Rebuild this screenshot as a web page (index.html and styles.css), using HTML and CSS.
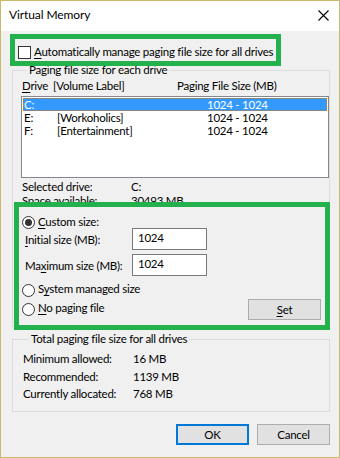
FILE: index.html
```html
<!DOCTYPE html>
<html>
<head>
<meta charset="utf-8">
<link rel="stylesheet" href="styles.css">
</head>
<body>
<div class="dlg">
  <div class="titlebar">
    <span class="title">Virtual Memory</span>
    <svg class="close" width="11" height="11" viewBox="0 0 11 11"><path d="M0.5 0.5 L10.5 10.5 M10.5 0.5 L0.5 10.5" stroke="#000" stroke-width="1.1" fill="none"/></svg>
  </div>
  <div class="body">
    <div class="auto-row"><span class="checkbox"></span><span><u>A</u>utomatically manage paging file size for all drives</span></div>

    <div class="group g1">
      <div class="group-title">Paging file size for each drive</div>
      <div class="list-head"><span><u>D</u>rive</span><span>[Volume Label]</span><span>Paging File Size (MB)</span></div>
      <div class="list">
        <div class="row sel"><span>C:</span><span></span><span>1024 - 1024</span></div>
        <div class="row"><span>E:</span><span>[Workoholics]</span><span>1024 - 1024</span></div>
        <div class="row"><span>F:</span><span>[Entertainment]</span><span>1024 - 1024</span></div>
      </div>
      <div class="info">
        <div class="info-row"><span class="info-k">Selected drive:</span><span>C:</span></div>
        <div class="info-row"><span class="info-k">Space available:</span><span>30493 MB</span></div>
      </div>
      <div class="opt opt-custom"><span class="radio on"></span><span><u>C</u>ustom size:</span></div>
      <div class="field"><span class="field-k"><u>I</u>nitial size (MB):</span><div class="edit">1024</div></div>
      <div class="field field-max"><span class="field-k">Ma<u>x</u>imum size (MB):</span><div class="edit">1024</div></div>
      <div class="opt opt-sys"><span class="radio"></span><span>S<u>y</u>stem managed size</span></div>
      <div class="last-row">
        <div class="opt opt-none"><span class="radio"></span><span><u>N</u>o paging file</span></div>
        <div class="btn"><u>S</u>et</div>
      </div>
    </div>

    <div class="group g2">
      <div class="group-title">Total paging file size for all drives</div>
      <div class="totals">
        <div class="tot-row"><span class="tot-k">Minimum allowed:</span><span>16 MB</span></div>
        <div class="tot-row"><span class="tot-k">Recommended:</span><span>1139 MB</span></div>
        <div class="tot-row"><span class="tot-k">Currently allocated:</span><span>768 MB</span></div>
      </div>
    </div>

    <div class="buttons">
      <div class="btn btn-default">OK</div>
      <div class="btn">Cancel</div>
    </div>
  </div>
  <div class="hl hl-1"></div>
  <div class="hl hl-2"></div>
</div>
</body>
</html>
```

FILE: styles.css
```css
html, body {
  margin: 0;
  padding: 0;
  background: #ffffff;
}

.dlg {
  width: 340px;
  height: 458px;
  box-sizing: border-box;
  border: 1px solid #c9b96b;
  background: #f0f0f0;
  position: relative;
  font-family: Lato, "Liberation Sans", sans-serif;
  font-size: 11.5px;
  letter-spacing: -0.25px;
  line-height: 15px;
  color: #000;
  display: flex;
  flex-direction: column;
  overflow: hidden;
}

u {
  text-decoration: underline;
  text-underline-offset: 2px;
}

.titlebar {
  height: 30px;
  flex: none;
  background: #ffffff;
  display: flex;
  align-items: flex-start;
  justify-content: space-between;
  box-sizing: border-box;
  padding: 6px 10px 0 8px;
}

.title {
  font-size: 12px;
  letter-spacing: -0.1px;
}

.close {
  margin-top: 3px;
  display: block;
}

.body {
  display: flex;
  flex-direction: column;
}

.auto-row {
  display: flex;
  align-items: flex-start;
  margin-top: 13px;
  padding-left: 17px;
  height: 15px;
}

.checkbox {
  width: 13px;
  height: 13px;
  box-sizing: border-box;
  border: 1px solid #333333;
  background: #ffffff;
  margin-top: 2px;
  margin-right: 3px;
  flex: none;
}

.group {
  border: 1px solid #dcdcdc;
  margin-left: 11px;
  width: 318px;
  box-sizing: border-box;
  display: flex;
  flex-direction: column;
}

.group-title {
  align-self: flex-start;
  margin: -9px 0 0 6px;
  padding: 0 2px;
  background: #f0f0f0;
  height: 15px;
}

.g1 {
  margin-top: 11px;
  padding: 0 0 6px 8px;
}

.list-head {
  margin-top: 1px;
  display: grid;
  grid-template-columns: 31px 124px auto;
  padding-left: 1px;
  height: 15px;
}

.list {
  margin-top: 3px;
  width: 308px;
  height: 82px;
  box-sizing: border-box;
  border: 1px solid #828790;
  background: #ffffff;
  padding: 1px;
}

.row {
  display: grid;
  grid-template-columns: 33px 150px auto;
  height: 13px;
  line-height: 13px;
  padding-left: 1px;
  box-sizing: border-box;
  overflow: hidden;
}

.row.sel {
  background: #3399ff;
  color: #ffffff;
  outline: 1px dotted #d9750f;
  outline-offset: -1px;
}

.info {
  margin-top: 2px;
  padding-left: 1px;
}

.info-row {
  display: flex;
  height: 14px;
  line-height: 14px;
}

.info-k {
  width: 109px;
}

.opt {
  display: flex;
  align-items: flex-start;
  height: 15px;
  padding-left: 1px;
}

.radio {
  width: 13px;
  height: 13px;
  box-sizing: border-box;
  border: 1px solid #333333;
  border-radius: 50%;
  background: #ffffff;
  margin-top: 3px;
  margin-right: 3px;
  flex: none;
  display: flex;
  align-items: center;
  justify-content: center;
}

.radio.on::after {
  content: "";
  width: 7px;
  height: 7px;
  border-radius: 50%;
  background: #333333;
}

.opt-custom {
  margin-top: 6px;
}

.opt-custom .radio {
  margin-top: 2px;
}

.field {
  display: flex;
  align-items: center;
  height: 22px;
  margin-top: -1px;
  padding-left: 4px;
}

.field-max {
  margin-top: 4px;
}

.field-k {
  width: 107px;
}

.edit {
  width: 75px;
  height: 22px;
  box-sizing: border-box;
  border: 1px solid #7a7a7a;
  background: #ffffff;
  padding: 1px 5px 0;
  line-height: 15px;
}

.opt-sys {
  margin-top: 5px;
}

.last-row {
  margin-top: 3px;
  display: flex;
  justify-content: space-between;
  align-items: flex-start;
  padding-right: 8px;
}

.opt-none {
  margin-top: 1px;
}

.btn {
  width: 73px;
  height: 21px;
  box-sizing: border-box;
  border: 1px solid #adadad;
  background: #e1e1e1;
  display: flex;
  align-items: center;
  justify-content: center;
  line-height: 15px;
}

.g2 {
  margin-top: 12px;
  padding: 0 0 8px 10px;
}

.totals {
  margin-top: 4px;
}

.tot-row {
  display: flex;
  height: 17.5px;
  line-height: 17.5px;
}

.tot-k {
  width: 110px;
}

.buttons {
  margin-top: 12px;
  display: flex;
  justify-content: flex-end;
  gap: 8px;
  padding-right: 9px;
}

.btn-default {
  border: 2px solid #0078d7;
}

.hl {
  position: absolute;
  box-sizing: border-box;
  border: 5px solid #22b14c;
}

.hl-1 {
  left: 9px;
  top: 33px;
  width: 271px;
  height: 32px;
}

.hl-2 {
  left: 13px;
  top: 201px;
  width: 316px;
  height: 128px;
}
```
